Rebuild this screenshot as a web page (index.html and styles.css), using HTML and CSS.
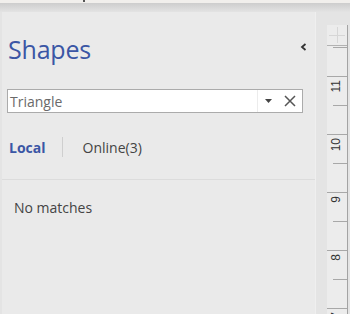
FILE: index.html
```html
<!DOCTYPE html>
<html lang="en">
<head>
    <meta charset="UTF-8">
    <meta name="viewport" content="width=device-width, initial-scale=1.0">
    <title>Shapes</title>
    <link rel="stylesheet" href="styles.css">
</head>
<body>
  <div class="topbar"><span class="mark"></span></div>
  <div class="shade"></div>
  <div class="workspace">

    <!-- Shapes pane -->
    <div class="pane">
      <div class="pane-head">
        <h1>Shapes</h1>
        <svg class="collapse" width="7" height="8" viewBox="0 0 7 8">
          <path d="M5.5 1 L2 4 L5.5 7" fill="none" stroke="#333" stroke-width="1.8"/>
        </svg>
      </div>

      <div class="search">
        <span class="search-text">Triangle</span>
        <span class="search-drop">
          <svg width="7" height="4" viewBox="0 0 7 4"><path d="M0 0 H7 L3.5 4 Z" fill="#444"/></svg>
        </span>
        <span class="search-clear">
          <svg width="12" height="12" viewBox="0 0 12 12">
            <path d="M1 1 L11 11 M11 1 L1 11" stroke="#555" stroke-width="1.5"/>
          </svg>
        </span>
      </div>

      <div class="tabs">
        <span class="tab active">Local</span>
        <span class="tab-sep"></span>
        <span class="tab">Online(3)</span>
      </div>

      <div class="results">No matches</div>
    </div>

    <div class="gutter"></div>

    <!-- Vertical ruler -->
    <div class="ruler">
      <div class="corner"></div>
      <div class="minor first"></div>
      <div class="gap"></div>
      <div class="seg"><span class="num">11</span><div class="minor"></div></div>
      <div class="seg"><span class="num">10</span><div class="minor"></div></div>
      <div class="seg"><span class="num">9</span><div class="minor"></div></div>
      <div class="seg"><span class="num">8</span><div class="minor"></div></div>
      <div class="seg"><span class="num">7</span><div class="minor"></div></div>
    </div>
  </div>
</body>
</html>
```

FILE: styles.css
```css
body {
    margin: 0;
    width: 350px;
    height: 314px;
    overflow: hidden;
    background-color: #e4e4e4;
    font-family: "Open Sans", "Noto Sans", sans-serif;
    color: #444;
}

.topbar {
    height: 3px;
    background-color: #f1efec;
    position: relative;
}
.mark {
    position: absolute;
    left: 83px;
    top: 0;
    width: 2px;
    height: 2px;
    background: #555;
}
.shade {
    height: 9px;
    background: linear-gradient(#cdcdcd, #e3e3e3);
}

.workspace {
    display: flex;
    height: 302px;
}

.pane {
    width: 313px;
    margin-left: 2px;
    background-color: #eaeaea;
    border-right: 1px solid #efefef;
}

.pane-head {
    display: flex;
    align-items: center;
    justify-content: space-between;
    padding: 20px 8px 0 6px;
    height: 34px;
}
h1 {
    margin: 0;
    font-size: 25px;
    font-weight: 400;
    color: #3b56a5;
    letter-spacing: -0.2px;
}
.collapse {
    margin-top: -5px;
}

.search {
    display: flex;
    align-items: center;
    margin: 23px 12px 0 5px;
    height: 22px;
    background: #fff;
    border: 1px solid #ababab;
}
.search-text {
    flex: 1;
    padding-left: 2px;
    font-size: 14px;
    color: #6a6a6a;
}
.search-drop {
    display: flex;
    align-items: center;
    justify-content: center;
    width: 20px;
    height: 22px;
    border-left: 1px solid #ececec;
}
.search-clear {
    display: flex;
    align-items: center;
    justify-content: center;
    width: 24px;
}

.tabs {
    display: flex;
    align-items: center;
    height: 20px;
    margin-top: 24px;
    padding-left: 7px;
    font-size: 14px;
}
.tab {
    color: #444;
}
.tab.active {
    color: #3b56a5;
    font-weight: 700;
}
.tab-sep {
    width: 1px;
    height: 20px;
    margin: 0 20px 0 16px;
    background: #cfcfcf;
}

.results {
    margin-top: 22px;
    border-top: 1px solid #dcdcdc;
    padding: 18px 12px;
    font-size: 14px;
    color: #444;
}

.gutter {
    width: 11px;
}

.ruler {
    width: 20px;
    margin-top: 13px;
    background-color: #ececec;
    border-right: 1px solid #a3a3a3;
    display: flex;
    flex-direction: column;
    overflow: hidden;
}
.ruler > div {
    flex-shrink: 0;
}
.corner {
    height: 20px;
    border-bottom: 1px solid #b2b2b2;
    background:
        linear-gradient(#d6d6d6, #d6d6d6) 10px 2px / 1px 16px no-repeat,
        linear-gradient(#d6d6d6, #d6d6d6) 2px 10px / 16px 1px no-repeat;
}
.minor {
    height: 1px;
    margin-left: 6px;
    background: #a8a8a8;
}
.minor.first {
    margin-top: 1px;
}
.gap {
    height: 28px;
}
.seg {
    height: 57px;
    border-top: 1px solid #a8a8a8;
    display: flex;
    flex-direction: column;
}
.num {
    writing-mode: vertical-rl;
    transform: rotate(180deg);
    align-self: flex-start;
    margin: 3px 0 0 3px;
    font-family: "Liberation Sans", sans-serif;
    font-size: 12px;
    line-height: 12px;
    color: #333;
}
.seg .minor {
    margin-top: auto;
    margin-bottom: 28px;
}
```
